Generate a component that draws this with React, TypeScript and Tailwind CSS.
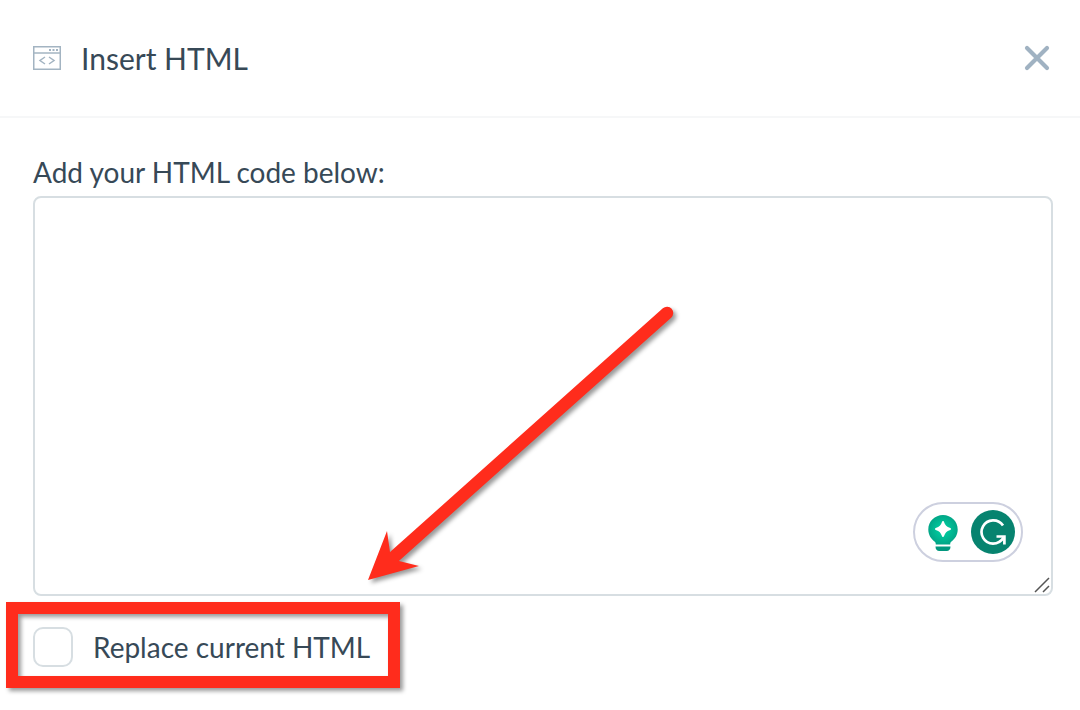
import { useState } from 'react';

function CodeWindowIcon() {
  return (
    <svg className="h-6 w-7 shrink-0" viewBox="0 0 28 24" fill="none" stroke="#a3b4c2" aria-hidden="true">
      <rect x="0.75" y="0.75" width="26.5" height="22.5" strokeWidth="1.5" />
      <path d="M1 7h26" strokeWidth="1.5" />
      <path d="M16 4h2M19.5 4h2M23 4h2" strokeWidth="2" />
      <path d="M12 11l-5 3.500 5 3.500M16 11l5 3.500-5 3.500" strokeWidth="1.5" />
    </svg>
  );
}

function AssistantBadge() {
  return (
    <div className="absolute right-[30px] bottom-[34px] flex h-[60px] w-[110px] items-center justify-between rounded-full border-2 border-[#cdd0df] bg-white pr-1.5 pl-3">
      <button type="button" aria-label="Suggestions">
        <svg className="block h-11 w-8" viewBox="0 0 32 44">
          <defs>
            <radialGradient id="bulb" cx="50%" cy="50%" r="55%">
              <stop offset="0.35" stopColor="#00c49a" />
              <stop offset="1" stopColor="#02a184" />
            </radialGradient>
          </defs>
          <path d="M16 5C7.800 5 1.300 11.400 1.300 19.500c0 5.500 2.900 9.500 6.200 12 1 .8 1.300 1.600 1.300 2.900h14.400c0-1.300.3-2.100 1.300-2.900 3.300-2.500 6.200-6.500 6.200-12C30.700 11.400 24.200 5 16 5z" fill="url(#bulb)" />
          <path d="M16 12c1.400 4.200 2.800 5.600 7 7-4.200 1.400-5.600 2.800-7 7-1.400-4.200-2.800-5.600-7-7 4.200-1.400 5.600-2.800 7-7z" fill="#fff" stroke="#fff" strokeWidth="2" strokeLinejoin="round" />
          <path d="M8.500 36.500h15c0 2.800-1.400 4.500-3.800 4.500h-7.400c-2.400 0-3.800-1.700-3.800-4.500z" fill="#02977e" />
        </svg>
      </button>
      <button type="button" aria-label="Check writing">
        <svg className="block h-11 w-11" viewBox="0 0 44 44" fill="none" stroke="#fff" strokeWidth="2.700">
          <circle cx="22" cy="22" r="22" fill="#07836f" stroke="none" />
          <path d="M32 15.500A11.700 11.700 0 1 0 22 33.700C27 33.700 30.500 31 33 27" />
          <path d="M25.500 26.500h7.900v8" />
        </svg>
      </button>
    </div>
  );
}

function ArrowCallout() {
  return (
    <svg
      className="pointer-events-none absolute top-[100px] left-[327px] h-[296px] w-[330px] drop-shadow-[3px_3px_2px_rgba(0,0,0,0.4)]"
      viewBox="360 296 330 296"
      aria-hidden="true"
    >
      <path d="M395 556L667 313" stroke="#ff2c1c" strokeWidth="12.500" strokeLinecap="round" />
      <path d="M368 580L387 531l3 21 9 9 20 5z" fill="#ff2c1c" />
    </svg>
  );
}

export default function App() {
  const [html, setHtml] = useState('');
  const [replace, setReplace] = useState(false);

  return (
    <div className="min-h-screen bg-white font-['Lato',sans-serif] text-[#374957]">
      <header className="flex items-center justify-between border-b-2 border-[#f6f7f8] py-9 pr-[30px] pl-[33px]">
        <div className="flex items-center gap-5">
          <CodeWindowIcon />
          <h1 className="text-[30px] leading-[44px]">Insert HTML</h1>
        </div>
        <button type="button" aria-label="Close">
          <svg className="block h-[26px] w-[26px]" viewBox="0 0 26 26" stroke="#a0b2c2" strokeWidth="4.200" strokeLinecap="round">
            <path d="M3 3l20 20M23 3L3 23" />
          </svg>
        </button>
      </header>

      <main className="pt-9 pr-[27px] pl-[33px]">
        <label htmlFor="html-code" className="block text-[28px] leading-9">
          Add your HTML code below:
        </label>
        <div className="relative mt-1.5">
          <textarea
            id="html-code"
            value={html}
            onChange={(e) => setHtml(e.target.value)}
            className="block h-[400px] w-full resize-none rounded-lg border-2 border-[#d7dee2] bg-white p-4 text-2xl outline-none"
          />
          <svg className="pointer-events-none absolute right-[3px] bottom-[3px] h-4 w-4" viewBox="0 0 16 16" stroke="#555" strokeWidth="1.500" aria-hidden="true">
            <path d="M1 15L15 1M9 15l6-6" />
          </svg>
          <AssistantBadge />
          <ArrowCallout />
        </div>

        <div className="relative mt-[31px] inline-flex items-center gap-5">
          <input
            id="replace-html"
            type="checkbox"
            checked={replace}
            onChange={(e) => setReplace(e.target.checked)}
            className="h-10 w-10 shrink-0 appearance-none rounded-[10px] border-2 border-[#d7dee2] bg-white checked:bg-[#a0b2c2]"
          />
          <label htmlFor="replace-html" className="text-[28px] leading-10">
            Replace current HTML
          </label>
          <div className="pointer-events-none absolute -top-[25px] -right-[30px] -bottom-[21px] -left-[27px] border-12 border-[#ff2c1c] drop-shadow-[3px_3px_2px_rgba(0,0,0,0.4)]" />
        </div>
      </main>
    </div>
  );
}
